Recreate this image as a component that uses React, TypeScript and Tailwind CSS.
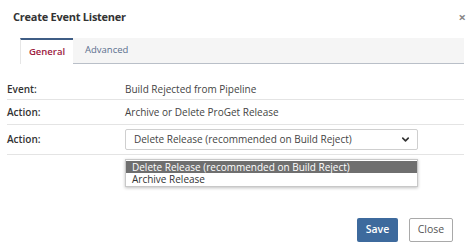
import { ChevronDown } from "lucide-react";

const rows = [
  { label: "Event:", value: "Build Rejected from Pipeline" },
  { label: "Action:", value: "Archive or Delete ProGet Release" },
];

export default function App() {
  return (
    <div
      className="w-[474px] h-[252px] bg-white overflow-hidden text-[#444]"
      style={{ fontFamily: '"Open Sans", "Noto Sans", sans-serif' }}
    >
      {/* Header */}
      <div className="flex items-center justify-between h-[34px] pl-[13px] pr-[8px]">
        <h1 className="text-[11px] font-bold text-[#333] tracking-[-0.25px]">Create Event Listener</h1>
        <span className="text-[13px] font-bold text-[#888] leading-none">×</span>
      </div>

      {/* Tabs */}
      <div className="mt-[4px] ml-[20px] mr-[10px] h-[26px] flex bg-[#f5f5f5] border-b border-[#b9bfc8]">
        <div className="w-[53px] -mb-px bg-white border-t-2 border-[#3f5d85] border-l border-l-[#e6e6e6] flex items-center justify-center text-[9.5px] font-semibold text-[#9c2040]">
          General
        </div>
        <div className="px-[12px] flex items-center text-[9.5px] text-[#5b6f8e]">Advanced</div>
      </div>

      {/* Form */}
      <div className="mt-[16px] ml-[7px] mr-[10px] text-[10px]">
        {rows.map((r, i) => (
          <div
            key={i}
            className={`flex items-center border-b border-[#e4e4e4] ${i === 0 ? "h-[20px]" : "h-[25px]"}`}
          >
            <span className="w-[118px] font-semibold text-[#333]">{r.label}</span>
            <span>{r.value}</span>
          </div>
        ))}
        <div className="relative flex items-center h-[30px] border-b border-[#e4e4e4]">
          <span className="w-[118px] font-semibold text-[#333]">Action:</span>
          <div className="w-[293px] h-[21px] flex items-center justify-between pl-[8px] pr-[6px] border border-[#cfcfcf] rounded-[2px] bg-white">
            <span>Delete Release (recommended on Build Reject)</span>
            <ChevronDown size={11} strokeWidth={3.5} className="text-[#333]" />
          </div>

          {/* Open dropdown */}
          <div className="absolute left-[118px] top-[34px] w-[293px] pt-px bg-white border border-[#c8c8c8] shadow-[0_1px_3px_rgba(0,0,0,0.25)] text-[10px]">
            <div className="h-[12px] flex items-center px-[6px] bg-[#6f6f6f] text-white">
              Delete Release (recommended on Build Reject)
            </div>
            <div className="h-[13px] flex items-center px-[6px] text-[#333]">Archive Release</div>
          </div>
        </div>
      </div>

      {/* Footer buttons */}
      <div className="mt-[63px] flex justify-end gap-[11px] pr-[21px]">
        <button className="w-[41px] h-[24px] rounded-[2px] bg-[#3d6a9d] text-white text-[10.5px] font-semibold">
          Save
        </button>
        <button className="w-[44px] h-[24px] rounded-[2px] border border-[#a9a9a9] bg-white text-[#555] text-[10.5px]">
          Close
        </button>
      </div>
    </div>
  );
}
